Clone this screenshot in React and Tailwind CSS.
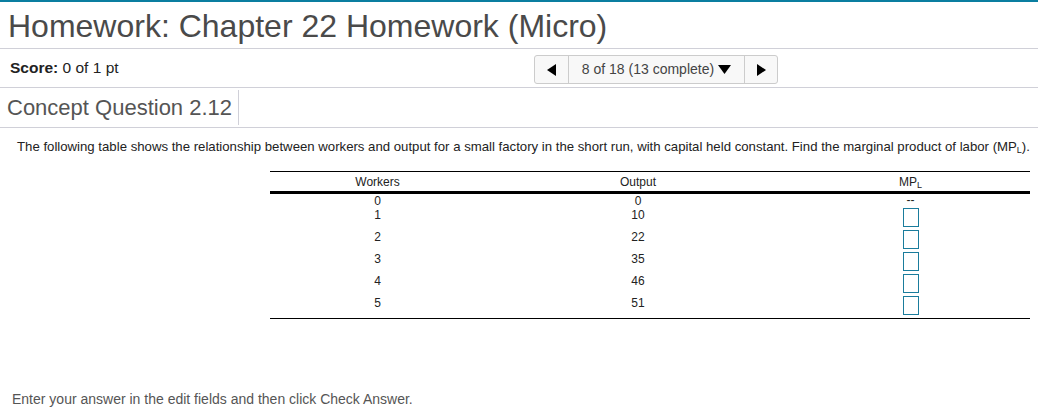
export default function App() {
  const rows = [
    { w: "0", o: "0", first: true },
    { w: "1", o: "10" },
    { w: "2", o: "22" },
    { w: "3", o: "35" },
    { w: "4", o: "46" },
    { w: "5", o: "51" },
  ];

  return (
    <div className="w-[1038px] h-[413px] bg-white text-[#444] overflow-hidden" style={{ fontFamily: '"Liberation Sans", Arial, sans-serif' }}>
      <div className="border-t-2 border-[#0a7ea0]" />
      <div className="h-[47px] border-b border-[#d0d0d8] px-[8px] flex items-center">
        <h1 className="text-[32px] leading-none text-[#4a4a4a] mt-[1px]">Homework: Chapter 22 Homework (Micro)</h1>
      </div>

      {/* score + nav */}
      <div className="h-[39px] border-b border-[#d0d0d8] flex items-center pl-[10px]">
        <div className="text-[15.5px] text-[#222]">
          <span className="font-bold">Score:</span> 0 of 1 pt
        </div>
        <div className="ml-auto mr-[260px] mt-[3px] h-[29px] flex border border-[#ccc] rounded-[3px] bg-[#f8f8f8] text-[14px]">
          <button className="w-[34px] flex items-center justify-center border-r border-[#ccc]">
            <svg width="9" height="12" viewBox="0 0 9 12"><path d="M9 0 L0 6 L9 12 Z" fill="#000" /></svg>
          </button>
          <button className="w-[176px] flex items-center justify-center gap-[4px] border-r border-[#ccc] text-[#444]">
            <span>8 of 18 (13 complete)</span>
            <svg width="13" height="9" viewBox="0 0 13 9"><path d="M0 0 L13 0 L6.5 9 Z" fill="#000" /></svg>
          </button>
          <button className="w-[32px] flex items-center justify-center">
            <svg width="9" height="12" viewBox="0 0 9 12"><path d="M0 0 L9 6 L0 12 Z" fill="#000" /></svg>
          </button>
        </div>
      </div>

      {/* concept title */}
      <div className="h-[40px] border-b border-[#d0d0d8] flex">
        <div className="w-[239px] border-r border-[#d0d0d8] my-[2px] flex items-center pl-[7px] text-[22px] text-[#555]">
          Concept Question 2.12
        </div>
      </div>

      <p className="mt-[11px] pl-[17px] text-[13.2px] text-[#222] leading-[16px] whitespace-nowrap">
        The following table shows the relationship between workers and output for a small factory in the short run, with capital held constant. Find the marginal product of labor (MP<sub className="text-[9px]">L</sub>).
      </p>

      <table className="ml-[270px] mt-[16px] w-[760px] text-[12px] text-[#222] border-collapse">
        <thead>
          <tr className="border-t border-black border-b-[3px] h-[21px]">
            <th className="w-[215px] font-normal text-center pt-[1px]">Workers</th>
            <th className="w-[306px] font-normal text-center pt-[1px]">Output</th>
            <th className="w-[239px] font-normal text-center pt-[1px]">
              MP<sub className="text-[9px]">L</sub>
            </th>
          </tr>
        </thead>
        <tbody className="border-b border-black">
          {rows.map((r) => (
            <tr key={r.w} className={r.first ? "h-[15px]" : "h-[22px]"}>
              <td className="text-center leading-[13px] align-top pt-[1px]">{r.w}</td>
              <td className="text-center leading-[13px] align-top pt-[1px]">{r.o}</td>
              <td className="text-center leading-[13px] align-top">
                {r.first ? (
                  <span>--</span>
                ) : (
                  <input className="w-[16px] h-[19px] border border-[#1a7c9c] mb-[2px] align-top" />
                )}
              </td>
            </tr>
          ))}
        </tbody>
      </table>

      <p className="mt-[70px] pl-[12px] text-[14px] text-[#555]">
        Enter your answer in the edit fields and then click Check Answer.
      </p>
    </div>
  );
}
